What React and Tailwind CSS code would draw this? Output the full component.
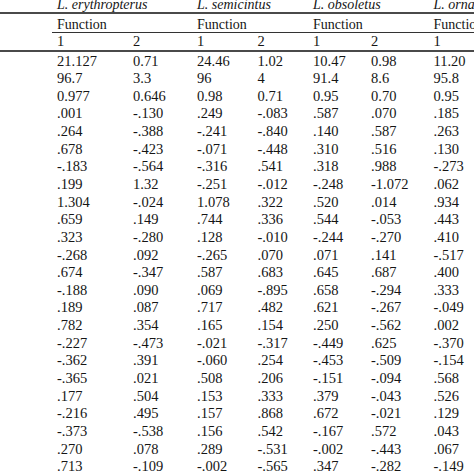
import React from "react";

const rows = [
  ["21.127", "0.71", "24.46", "1.02", "10.47", "0.98", "11.20"],
  ["96.7", "3.3", "96", "4", "91.4", "8.6", "95.8"],
  ["0.977", "0.646", "0.98", "0.71", "0.95", "0.70", "0.95"],
  [".001", "-.130", ".249", "-.083", ".587", ".070", ".185"],
  [".264", "-.388", "-.241", "-.840", ".140", ".587", ".263"],
  [".678", "-.423", "-.071", "-.448", ".310", ".516", ".130"],
  ["-.183", "-.564", "-.316", ".541", ".318", ".988", "-.273"],
  [".199", "1.32", "-.251", "-.012", "-.248", "-1.072", ".062"],
  ["1.304", "-.024", "1.078", ".322", ".520", ".014", ".934"],
  [".659", ".149", ".744", ".336", ".544", "-.053", ".443"],
  [".323", "-.280", ".128", "-.010", "-.244", "-.270", ".410"],
  ["-.268", ".092", "-.265", ".070", ".071", ".141", "-.517"],
  [".674", "-.347", ".587", ".683", ".645", ".687", ".400"],
  ["-.188", ".090", ".069", "-.895", ".658", "-.294", ".333"],
  [".189", ".087", ".717", ".482", ".621", "-.267", "-.049"],
  [".782", ".354", ".165", ".154", ".250", "-.562", ".002"],
  ["-.227", "-.473", "-.021", "-.317", "-.449", ".625", "-.370"],
  ["-.362", ".391", "-.060", ".254", "-.453", "-.509", "-.154"],
  ["-.365", ".021", ".508", ".206", "-.151", "-.094", ".568"],
  [".177", ".504", ".153", ".333", ".379", "-.043", ".526"],
  ["-.216", ".495", ".157", ".868", ".672", "-.021", ".129"],
  ["-.373", "-.538", ".156", ".542", "-.167", ".572", ".043"],
  [".270", ".078", ".289", "-.531", "-.002", "-.443", ".067"],
  [".713", "-.109", "-.002", "-.565", ".347", "-.282", "-.149"],
];

const cols =
  "grid grid-cols-[57px_76px_64px_60.5px_55.5px_58px_62.5px_100px]";

export default function App() {
  return (
    <div className="w-[474px] h-[474px] overflow-hidden bg-white text-[#151515] font-['Liberation_Serif',serif] text-[14px] whitespace-nowrap">
      {/* species row */}
      <div className={`${cols} h-[12px] leading-[9px] italic`}>
        <div />
        <div className="col-span-2">L. erythropterus</div>
        <div className="col-span-2">L. semicintus</div>
        <div className="col-span-2">L. obsoletus</div>
        <div>L. ornatus</div>
      </div>
      <div className="h-[2px] bg-[#4a4a4a]" />
      {/* function row */}
      <div className={`${cols} h-[17.5px] leading-[14px] pt-[3.6px]`}>
        <div />
        <div className="col-span-2">Function</div>
        <div className="col-span-2">Function</div>
        <div className="col-span-2">Function</div>
        <div>Function</div>
      </div>
      <div className="ml-[52px] h-[1px] bg-[#333]" />
      {/* numbers row */}
      <div className={`${cols} h-[17.5px] leading-[14px] pt-[1.8px] text-[14.5px]`}>
        <div />
        <div>1</div>
        <div>2</div>
        <div>1</div>
        <div>2</div>
        <div>1</div>
        <div>2</div>
        <div>1</div>
      </div>
      <div className="h-[2px] bg-[#4a4a4a]" />
      {/* data */}
      <div className="pt-[0.5px] text-[14.5px]">
        {rows.map((r, i) => (
          <div key={i} className={`${cols} h-[17.65px] leading-[17.65px]`}>
            <div />
            {r.map((v, j) => (
              <div key={j}>{v}</div>
            ))}
          </div>
        ))}
      </div>
    </div>
  );
}
